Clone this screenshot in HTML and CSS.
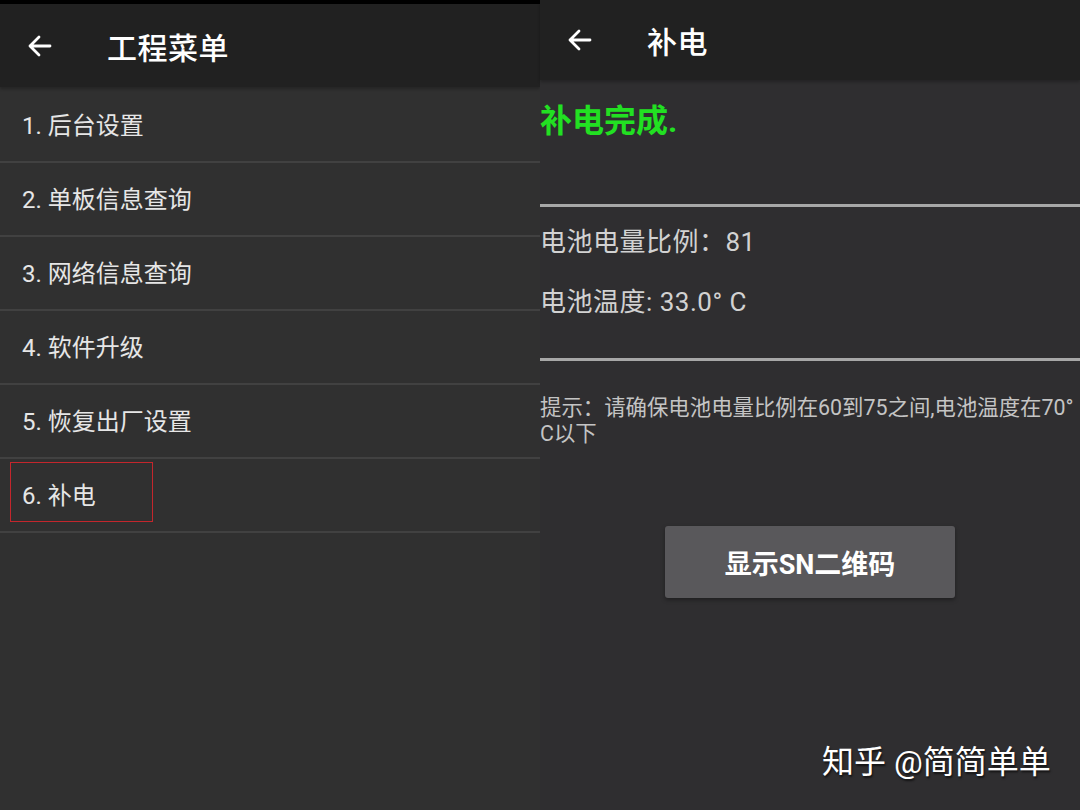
FILE: index.html
```html
<!DOCTYPE html>
<html lang="zh">
<head>
    <meta charset="UTF-8">
    <title>工程菜单</title>
    <link rel="stylesheet" href="styles.css">
</head>
<body>
<div class="screen">
    <!-- 左边: 工程菜单 -->
    <div class="panel panel_left">
        <div class="topbar topbar_left">
            <svg class="back" width="25" height="24" viewBox="0 0 25 24">
                <path d="M23 12H3 M12 3 L3 12 L12 21" fill="none" stroke="#fff" stroke-width="2.8" stroke-linecap="round" stroke-linejoin="round"/>
            </svg>
            <span class="title">工程菜单</span>
        </div>
        <ul class="menu">
            <li class="menu_item">1. 后台设置</li>
            <li class="menu_item">2. 单板信息查询</li>
            <li class="menu_item">3. 网络信息查询</li>
            <li class="menu_item">4. 软件升级</li>
            <li class="menu_item">5. 恢复出厂设置</li>
            <li class="menu_item">6. 补电<span class="mark"></span></li>
        </ul>
    </div>

    <!-- 右边: 补电 -->
    <div class="panel panel_right">
        <div class="topbar">
            <svg class="back" width="25" height="24" viewBox="0 0 25 24">
                <path d="M23 12H3 M12 3 L3 12 L12 21" fill="none" stroke="#fff" stroke-width="2.8" stroke-linecap="round" stroke-linejoin="round"/>
            </svg>
            <span class="title">补电</span>
        </div>
        <div class="content">
            <div class="done">补电完成.</div>
            <div class="rule rule_first"></div>
            <div class="info info_first">电池电量比例：81</div>
            <div class="info">电池温度: 33.0° C</div>
            <div class="rule rule_second"></div>
            <p class="tip">提示：请确保电池电量比例在60到75之间,电池温度在70°<wbr>C以下</p>
            <div class="btn_row">
                <button class="sn_btn" type="button">显示SN二维码</button>
            </div>
        </div>
        <div class="watermark">知乎 @简简单单</div>
    </div>
</div>
</body>
</html>
```

FILE: styles.css
```css
body {
    margin: 0;
    background-color: #2f2f2f;
    font-family: Roboto, "Noto Sans CJK SC", sans-serif;
}

.screen {
    display: flex;
    width: 1080px;
    height: 810px;
    overflow: hidden;
}

.panel {
    width: 540px;
    height: 810px;
    display: flex;
    flex-direction: column;
}

.panel_left {
    background-color: #303030;
}

.panel_right {
    position: relative;
    background-color: #2f2e30;
}

.topbar {
    display: flex;
    align-items: center;
    gap: 55px;
    height: 80px;
    padding-left: 27px;
    background-color: #212121;
    box-shadow: 0 2px 3px rgba(0, 0, 0, 0.25);
}

.topbar_left {
    height: 83px;
    border-top: 4px solid #000;
}

.title {
    color: #fff;
    font-size: 30px;
    font-weight: 500;
    letter-spacing: 0.5px;
}

.menu {
    list-style: none;
    margin: 2px 0 0;
    padding: 0;
}

.menu_item {
    position: relative;
    height: 72px;
    line-height: 74px;
    padding-left: 22px;
    color: #e6e6e6;
    font-size: 24px;
    border-bottom: 2px solid #414141;
}

.mark {
    position: absolute;
    left: 10px;
    top: 3px;
    width: 141px;
    height: 58px;
    border: 1.5px solid #c4262c;
}

.content {
    display: flex;
    flex-direction: column;
}

.done {
    margin-top: 21px;
    line-height: 40px;
    color: #22e022;
    font-size: 32px;
    font-weight: bold;
}

.rule {
    height: 3px;
    background-color: #a7a7a7;
}

.rule_first {
    margin-top: 63px;
}

.rule_second {
    margin-top: 38px;
}

.info {
    line-height: 36px;
    color: #d2d2d2;
    font-size: 26px;
    letter-spacing: 0.5px;
    margin-top: 24px;
}

.info_first {
    margin-top: 17px;
}

.tip {
    margin: 34px 0 0;
    padding-right: 6px;
    line-height: 26px;
    color: #c4c4c4;
    font-size: 21.4px;
}

.btn_row {
    display: flex;
    justify-content: center;
    margin-top: 79px;
}

.sn_btn {
    width: 290px;
    height: 72px;
    border: none;
    border-radius: 3px;
    background-color: #59585b;
    color: #fff;
    font-family: Roboto, "Noto Sans CJK SC", sans-serif;
    font-size: 27px;
    font-weight: bold;
    box-shadow: 0 2px 4px rgba(0, 0, 0, 0.35);
}

.watermark {
    position: absolute;
    left: 282px;
    top: 744px;
    line-height: 36px;
    color: #fff;
    font-size: 32px;
    text-shadow: 1px 2px 2px rgba(0, 0, 0, 0.6);
}
```
